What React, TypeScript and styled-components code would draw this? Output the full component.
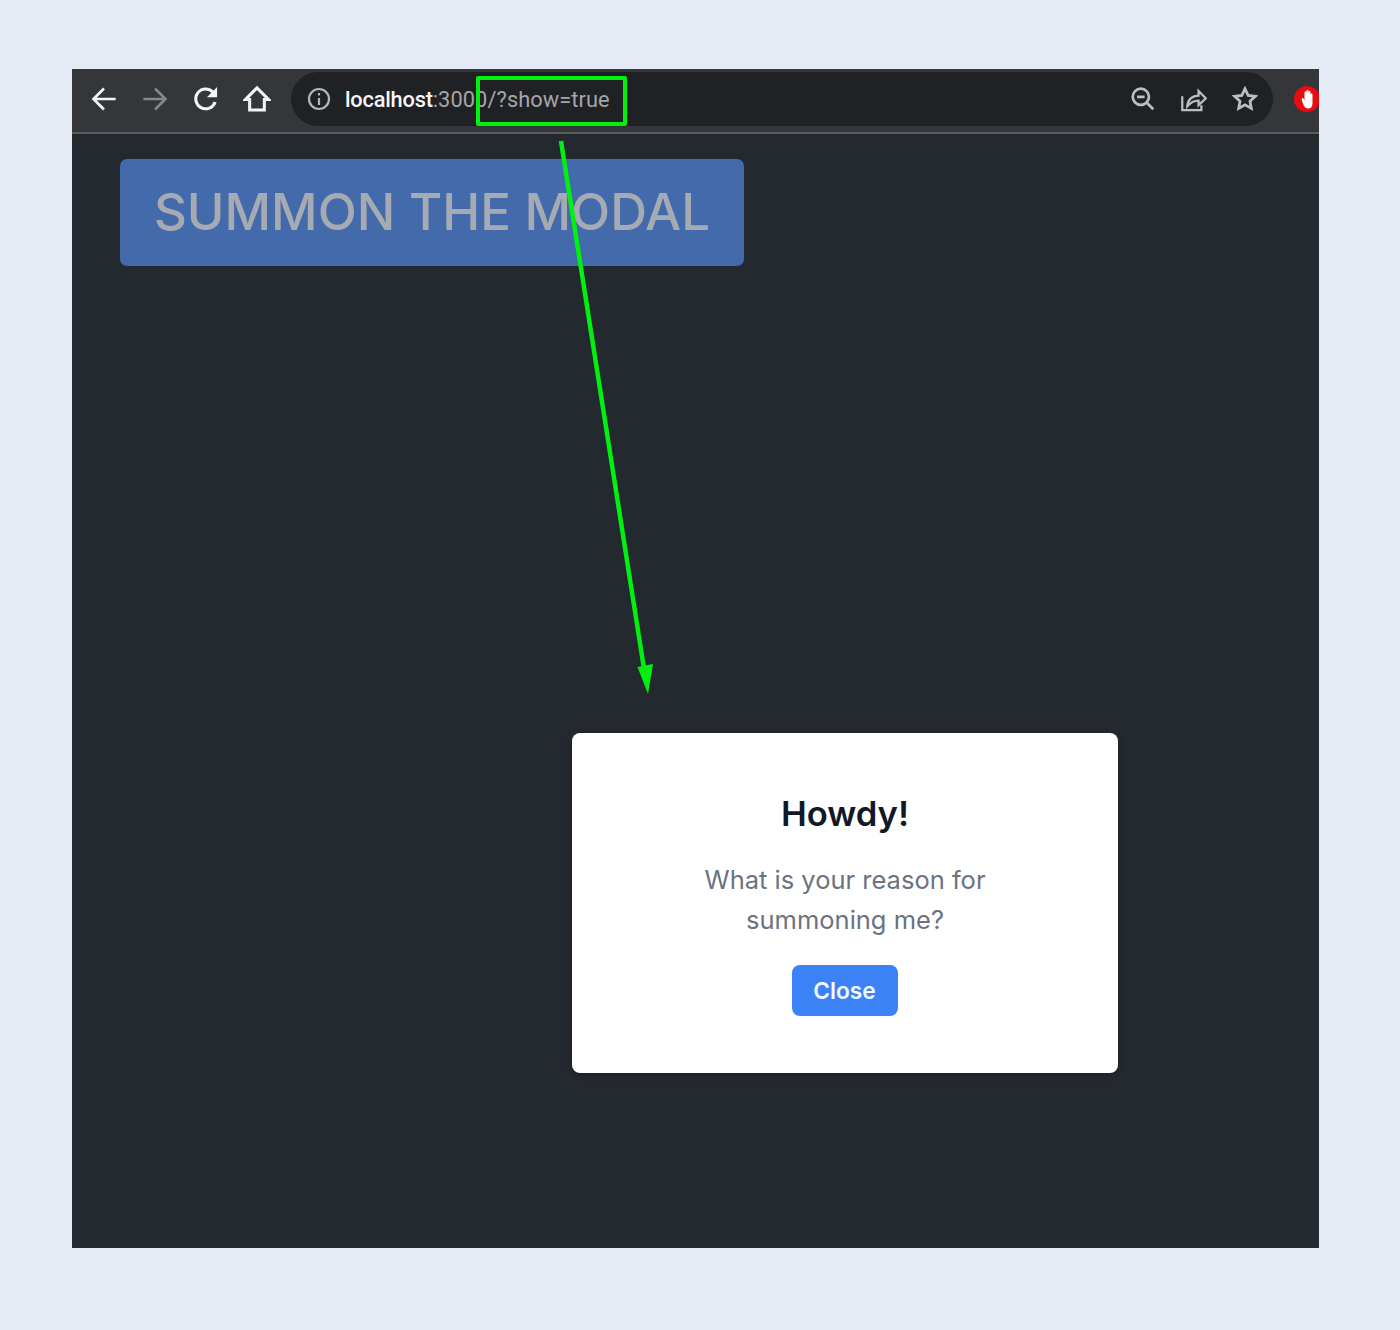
import React from "react";
import styled, { createGlobalStyle } from "styled-components";

const GlobalStyle = createGlobalStyle`
  html, body {
    margin: 0;
    padding: 0;
    background: #e4ebf5;
  }
`;

const Page = styled.div`
  width: 1400px;
  height: 1330px;
  box-sizing: border-box;
  padding: 69px 81px 82px 72px;
  background: #e4ebf5;
`;

const BrowserWindow = styled.div`
  position: relative;
  height: 100%;
  display: flex;
  flex-direction: column;
  overflow: hidden;
  background: #242930;
`;

const Toolbar = styled.div`
  height: 65px;
  flex: none;
  box-sizing: border-box;
  display: flex;
  align-items: flex-start;
  padding: 3px 0 0 6px;
  background: #35363a;
  border-bottom: 2px solid #5a5b5f;
`;

const NavIcon = styled.div<{ $dim?: boolean }>`
  width: 51px;
  height: 54px;
  flex: none;
  display: flex;
  align-items: center;
  justify-content: center;
  color: ${(p) => (p.$dim ? "#85868a" : "#f4f5f6")};
`;

const Omnibox = styled.div`
  width: 982px;
  height: 54px;
  flex: none;
  margin-left: 9px;
  box-sizing: border-box;
  display: flex;
  align-items: center;
  padding: 0 3px 0 15px;
  border-radius: 27px;
  background: #202124;
`;

const InfoIcon = styled.div`
  width: 26px;
  height: 26px;
  flex: none;
  color: #b4b6b9;
`;

const Url = styled.div`
  margin-left: 13px;
  flex: 1;
  font-family: Roboto, "Liberation Sans", sans-serif;
  font-size: 21.8px;
  letter-spacing: 0.08px;
  color: #a4a6a9;
  white-space: nowrap;
`;

const Host = styled.span`
  color: #f6f7f8;
  font-weight: 500;
  letter-spacing: -0.2px;
`;

const OmniAction = styled.div`
  width: 51px;
  height: 54px;
  flex: none;
  display: flex;
  align-items: center;
  justify-content: center;
  color: #bcbec1;
`;

const Extension = styled.div`
  flex: none;
  width: 26px;
  height: 26px;
  margin: 14px 0 0 21px;
`;

const Content = styled.div`
  flex: 1;
  padding: 25px 48px;
  display: flex;
  flex-direction: column;
  align-items: flex-start;
`;

const SummonButton = styled.button`
  width: 624px;
  height: 107px;
  flex: none;
  padding: 0 0 2px;
  border: none;
  border-radius: 7px;
  background: #436aab;
  color: #a6abb3;
  font-family: Inter, "Liberation Sans", sans-serif;
  font-size: 51px;
  font-weight: 500;
  white-space: nowrap;
`;

const Modal = styled.div`
  width: 546px;
  height: 340px;
  flex: none;
  margin: 467px 0 0 452px;
  box-sizing: border-box;
  padding-top: 57px;
  display: flex;
  flex-direction: column;
  align-items: center;
  border-radius: 8px;
  background: #ffffff;
  box-shadow: 0 2px 6px rgba(0, 0, 0, 0.25);
`;

const Title = styled.h2`
  margin: 0;
  font-family: Inter, "Liberation Sans", sans-serif;
  font-size: 34.6px;
  line-height: 46px;
  font-weight: 600;
  color: #111827;
`;

const Message = styled.p`
  margin: 24px 0 0;
  width: 320px;
  text-align: center;
  font-family: Inter, "Liberation Sans", sans-serif;
  font-size: 25.5px;
  line-height: 40px;
  color: #6b7280;
`;

const CloseButton = styled.button`
  width: 106px;
  height: 51px;
  margin: 25px 1px 0 0;
  padding: 0;
  border: none;
  border-radius: 8px;
  background: #3b82f6;
  color: #f4f8ff;
  font-family: Inter, "Liberation Sans", sans-serif;
  font-size: 22.7px;
  font-weight: 600;
`;

const Highlight = styled.div`
  position: absolute;
  left: 404px;
  top: 7px;
  width: 151px;
  height: 50px;
  box-sizing: border-box;
  border: 4px solid #00f010;
  border-radius: 2px;
`;

const ArrowOverlay = styled.svg`
  position: absolute;
  left: 0;
  top: 0;
  pointer-events: none;
`;

const icon = {
  width: 28,
  height: 28,
  viewBox: "0 0 24 24",
  fill: "none",
  stroke: "currentColor",
  strokeWidth: 2.3,
};

const App: React.FC = () => {
  return (
    <>
      <GlobalStyle />
      <Page>
        <BrowserWindow>
          <Toolbar>
            <NavIcon>
              <svg {...icon}>
                <path d="M22 12H3M12 3l-9 9 9 9" />
              </svg>
            </NavIcon>
            <NavIcon $dim>
              <svg {...icon}>
                <path d="M2 12h19M12 3l9 9-9 9" />
              </svg>
            </NavIcon>
            <NavIcon>
              <svg {...icon} strokeWidth={2.6}>
                <path d="M19.8 14.500A8.500 8.500 0 1 1 18.200 6.400" />
                <path d="M21 3v7h-7z" fill="currentColor" strokeWidth={1} />
              </svg>
            </NavIcon>
            <NavIcon>
              <svg {...icon} strokeWidth={2.6}>
                <path d="M12 2.500 2 12.500h3.700V21.500h12.600V12.500H22z" />
              </svg>
            </NavIcon>
            <Omnibox>
              <InfoIcon>
                <svg width={26} height={26} viewBox="0 0 26 26" fill="none" stroke="currentColor" strokeWidth={2.2}>
                  <circle cx={13} cy={13} r={10} />
                  <path d="M13 12v7" />
                  <path d="M13 7v2.400" />
                </svg>
              </InfoIcon>
              <Url>
                <Host>localhost</Host>:3000/?show=true
              </Url>
              <OmniAction>
                <svg {...icon} width={26} height={26} strokeWidth={2.5}>
                  <circle cx={10} cy={10} r={7.500} />
                  <path d="M6.500 10h7M15.500 15.500l6 6" />
                </svg>
              </OmniAction>
              <OmniAction>
                <svg {...icon} width={27} height={27} strokeWidth={2}>
                  <path d="M2 9v12.500h17V17" />
                  <path d="M6.500 18c.3-6 4.500-9.500 10-9.500V4.500l6.500 6.500-6.500 6v-4c-4 0-7 1.500-10 5z" />
                </svg>
              </OmniAction>
              <OmniAction>
                <svg {...icon} width={26} height={26} strokeWidth={2.5}>
                  <path d="m12 2.500 2.900 6.200 6.600.8-4.900 4.500 1.300 6.700-5.900-3.300-5.900 3.300 1.300-6.700-4.900-4.500 6.600-.8z" />
                </svg>
              </OmniAction>
            </Omnibox>
            <Extension>
              <svg width={26} height={26} viewBox="0 0 26 26">
                <circle cx={13} cy={13} r={13} fill="#ea0a12" />
                <path
                  d="M7.500 13.500 9.500 19c1 2.500 2.500 3.500 4.500 3.500 3 0 4.500-2 4.500-5V8.500c0-1.500-2-1.500-2 0V6c0-1.500-2-1.500-2 0V5c0-1.500-2-1.500-2 0v1.500c0-1.500-2-1.500-2 0V14l-1-1.500c-.7-1-2-.5-1.500 1z"
                  fill="#ffffff"
                />
              </svg>
            </Extension>
          </Toolbar>
          <Content>
            <SummonButton>SUMMON THE MODAL</SummonButton>
            <Modal>
              <Title>Howdy!</Title>
              <Message>What is your reason for summoning me?</Message>
              <CloseButton>Close</CloseButton>
            </Modal>
          </Content>
          <Highlight />
          <ArrowOverlay width={1247} height={1179} viewBox="0 0 1247 1179">
            <path d="M489 72 573 606" stroke="#00f010" strokeWidth={4.500} fill="none" />
            <path d="M565.500 598 581 595 576 625z" fill="#00f010" />
          </ArrowOverlay>
        </BrowserWindow>
      </Page>
    </>
  );
};

export default App;
